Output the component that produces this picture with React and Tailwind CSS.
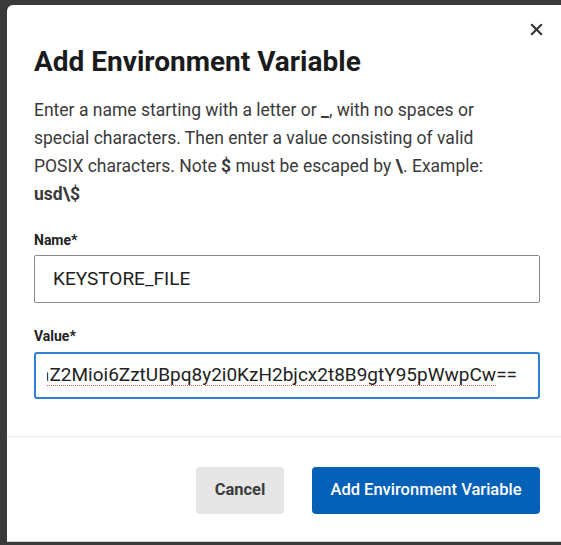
import { X } from 'lucide-react'

const App = () => {
  return (
    <div className="w-[561px] h-[545px] bg-[#3a3a3a] pl-[7px] pt-[5px] pb-[3px] overflow-hidden font-['Roboto',sans-serif]">
      <div className="h-full bg-white rounded-tl-[6px] flex flex-col">
        {/* header + body */}
        <div className="relative pl-[27px] pr-[21px] pt-[41px]">
          <button className="absolute top-[15px] right-[15px] text-[#333]">
            <X size={19} strokeWidth={2.6} />
          </button>
          <h1 className="text-[28px] font-bold text-[#1b1b1b] leading-[32px]">
            Add Environment Variable
          </h1>
          <p className="mt-[18px] w-[488px] text-[17.5px] leading-[28px] text-[#3a3a3a]">
            Enter a name starting with a letter or <b>_</b>, with no spaces or special
            characters. Then enter a value consisting of valid POSIX characters. Note{' '}
            <b>$</b> must be escaped by <b>\</b>. Example: <b>usd\$</b>
          </p>

          <label className="block mt-[22px] text-[14px] font-bold text-[#222] leading-[20px]">
            Name*
          </label>
          <div className="mt-[5px] h-[48px] border border-[#8a8a8a] rounded-[2px] flex items-center px-[18px] text-[19px] text-[#222]">
            KEYSTORE_FILE
          </div>

          <label className="block mt-[23px] text-[14px] font-bold text-[#222] leading-[20px]">
            Value*
          </label>
          <div className="mt-[6px] h-[47px] border-2 border-[#2f7fd6] rounded-[3px] flex items-center pl-[11px] pr-[21px] text-[19px] text-[#222]">
            <div className="flex-1 flex justify-end overflow-hidden whitespace-nowrap">
              <span className="shrink-0">
                <span className="underline decoration-dotted decoration-[#e05050] decoration-1 underline-offset-[4px]">
                  eyJhbGciOiJIUzI1NiJ9eyJsdaZ2Mioi6ZztUBpq8y2i0KzH2bjcx2t8B9gtY95pWwpCw
                </span>
                ==
              </span>
            </div>
          </div>
        </div>

        <div className="mt-[37px] border-t border-[#ececec]" />

        {/* footer */}
        <div className="flex justify-end gap-[28px] pr-[21px] pt-[30px]">
          <button className="w-[88px] h-[47px] bg-[#e6e6e6] rounded-[4px] text-[16.5px] font-bold text-[#3c3c3c]">
            Cancel
          </button>
          <button className="w-[228px] h-[47px] bg-[#0561b8] rounded-[4px] text-[16.5px] font-medium text-white">
            Add Environment Variable
          </button>
        </div>

        <div className="flex-1" />
        <div className="h-[1px] bg-[#cfcfcf]" />
      </div>
    </div>
  )
}

export default App
